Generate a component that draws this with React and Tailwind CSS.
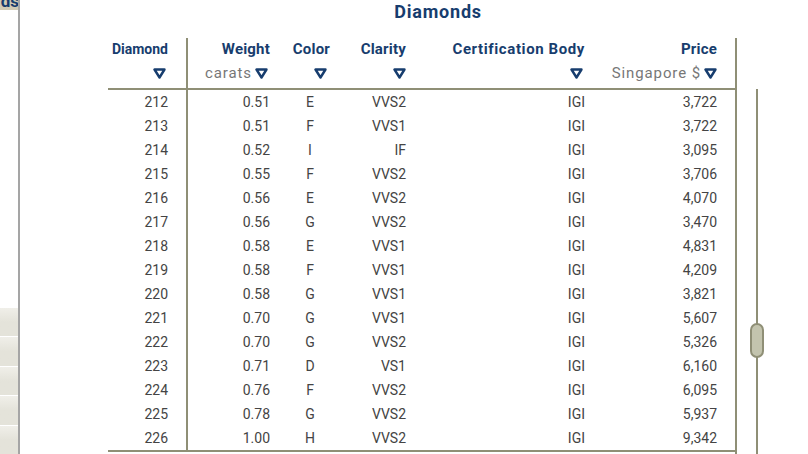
import React from 'react';

const rows = [
    ['212', '0.51', 'E', 'VVS2', 'IGI', '3,722'],
    ['213', '0.51', 'F', 'VVS1', 'IGI', '3,722'],
    ['214', '0.52', 'I', 'IF', 'IGI', '3,095'],
    ['215', '0.55', 'F', 'VVS2', 'IGI', '3,706'],
    ['216', '0.56', 'E', 'VVS2', 'IGI', '4,070'],
    ['217', '0.56', 'G', 'VVS2', 'IGI', '3,470'],
    ['218', '0.58', 'E', 'VVS1', 'IGI', '4,831'],
    ['219', '0.58', 'F', 'VVS1', 'IGI', '4,209'],
    ['220', '0.58', 'G', 'VVS1', 'IGI', '3,821'],
    ['221', '0.70', 'G', 'VVS1', 'IGI', '5,607'],
    ['222', '0.70', 'G', 'VVS2', 'IGI', '5,326'],
    ['223', '0.71', 'D', 'VS1', 'IGI', '6,160'],
    ['224', '0.76', 'F', 'VVS2', 'IGI', '6,095'],
    ['225', '0.78', 'G', 'VVS2', 'IGI', '5,937'],
    ['226', '1.00', 'H', 'VVS2', 'IGI', '9,342'],
];

function SortArrow() {
    return (
        <svg width="13" height="11" viewBox="0 0 13 11" className="inline-block shrink-0">
            <polygon points="1.5,1.5 11.5,1.5 6.5,9.5" fill="none" stroke="#173d6e" strokeWidth="2.4" strokeLinejoin="round" />
        </svg>
    );
}

const cols = 'grid grid-cols-[80px_82px_60px_76px_179px_132px_18px]';
const head = 'font-bold text-[#173d6e] text-[15px]';
const sub = 'text-[#777] text-[15px] tracking-[0.9px]';

export default function App() {
    return (
        <div className="w-[808px] h-[454px] overflow-hidden bg-white flex font-['Roboto',sans-serif]">
            {/* left panel */}
            <div className="w-[20px] h-full border-r-2 border-[#a5a5a5] flex flex-col shrink-0">
                <div className="h-[10px] bg-[#d2cbb4] overflow-hidden flex justify-end">
                    <span className="text-[17px] font-bold text-[#173d6e] leading-none -mt-[7px] -mr-[1px]">ds</span>
                </div>
                <div className="h-[302px]" />
                {[0, 1, 2, 3, 4].map((i) => (
                    <div key={i} className="h-[30px] border-t border-white bg-gradient-to-b from-[#f0efe9] via-[#e4e3da] to-[#e4e3da]" />
                ))}
            </div>

            {/* main */}
            <div className="flex-1 flex flex-col">
                <div className="h-[38px] shrink-0 pl-[48px] text-center">
                    <h1 className="text-[18px] font-bold tracking-[0.8px] text-[#173d6e] leading-[24px]">Diamonds</h1>
                </div>

                <div className="flex ml-[88px]">
                    <div className="border-r-2 border-[#8f8f76]">
                        {/* header */}
                        <div className={`${cols} h-[52px] border-b-2 border-[#8f8f76] leading-[20px]`}>
                            <div className="border-r-2 border-[#8f8f76] pr-[18px] pt-[1px] flex flex-col items-end">
                                <span className="font-bold text-[#173d6e] text-[14px]">Diamond</span>
                                <span className="mt-[3px] pr-[2px] flex items-center h-[22px]"><SortArrow /></span>
                            </div>
                            <div className="pt-[1px] flex flex-col items-end">
                                <span className={`${head} tracking-[0.2px]`}>Weight</span>
                                <span className={`mt-[3px] h-[22px] flex items-center gap-[3px] pr-[2px] ${sub}`}>carats <SortArrow /></span>
                            </div>
                            <div className="pt-[1px] flex flex-col items-end">
                                <span className={`${head} tracking-[0.2px]`}>Color</span>
                                <span className="mt-[3px] h-[22px] flex items-center pr-[3px]"><SortArrow /></span>
                            </div>
                            <div className="pt-[1px] flex flex-col items-end">
                                <span className={`${head} tracking-[0.2px]`}>Clarity</span>
                                <span className="mt-[3px] h-[22px] flex items-center"><SortArrow /></span>
                            </div>
                            <div className="pt-[1px] flex flex-col items-end">
                                <span className={`${head} tracking-[0.6px]`}>Certification Body</span>
                                <span className="mt-[3px] h-[22px] flex items-center pr-[2px]"><SortArrow /></span>
                            </div>
                            <div className="pt-[1px] flex flex-col items-end">
                                <span className={`${head} tracking-[0.2px]`}>Price</span>
                                <span className={`mt-[3px] h-[22px] flex items-center gap-[3px] ${sub}`}>Singapore $ <SortArrow /></span>
                            </div>
                            <div />
                        </div>

                        {/* body */}
                        <div className="border-b-2 border-[#8f8f76] text-[14px] text-[#444]">
                            {rows.map((r) => (
                                <div key={r[0]} className={`${cols} h-[24px] items-center`}>
                                    <div className="border-r-2 border-[#8f8f76] h-full flex items-center justify-end pr-[18px]">{r[0]}</div>
                                    <div className="text-right">{r[1]}</div>
                                    <div className="text-center pl-[20px]">{r[2]}</div>
                                    <div className="text-right">{r[3]}</div>
                                    <div className="text-right">{r[4]}</div>
                                    <div className="text-right">{r[5]}</div>
                                    <div />
                                </div>
                            ))}
                        </div>
                    </div>

                    {/* scrollbar */}
                    <div className="ml-[13px] w-[14px] mt-[51px] relative flex justify-center shrink-0">
                        <div className="w-[2px] h-[365px] bg-[#8f8f76]" />
                        <div className="absolute left-0 top-[234px] w-[14px] h-[35px] rounded-full bg-[#c3c4ae] border-2 border-[#8f8f76]" />
                    </div>
                </div>
            </div>
        </div>
    );
}
